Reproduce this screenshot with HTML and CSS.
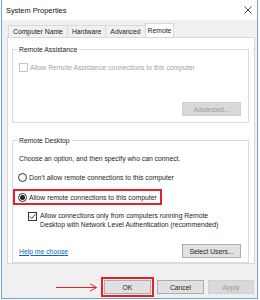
FILE: index.html
```html
<!DOCTYPE html>
<html lang="en">
<head>
    <meta charset="UTF-8">
    <title>System Properties</title>
    <link rel="stylesheet" href="styles.css">
</head>
<body>
    <div class="window">
        <div class="titlebar">
            <span class="title">System Properties</span>
            <svg class="close" width="8" height="8" viewBox="0 0 8 8">
                <path d="M0.5 0.5 L7.5 7.5 M7.5 0.5 L0.5 7.5" stroke="#333" stroke-width="0.9" fill="none"/>
            </svg>
        </div>

        <div class="client">
            <div class="tabs">
                <div class="tab">Computer Name</div>
                <div class="tab">Hardware</div>
                <div class="tab">Advanced</div>
                <div class="tab active">Remote</div>
            </div>

            <div class="panel">
                <fieldset class="group group-assist">
                    <legend>Remote Assistance</legend>
                    <div class="option disabled">
                        <span class="box"></span>
                        <span>Allow Remote Assistance connections to this computer</span>
                    </div>
                    <div class="btn-row">
                        <button class="btn wide" disabled>Advanced...</button>
                    </div>
                </fieldset>

                <fieldset class="group group-desktop">
                    <legend>Remote Desktop</legend>
                    <p class="hint">Choose an option, and then specify who can connect.</p>
                    <div class="option radio-one">
                        <span class="radio"></span>
                        <span>Don’t allow remote connections to this computer</span>
                    </div>
                    <!-- red marker around the chosen option -->
                    <div class="marker">
                        <div class="option">
                            <span class="radio checked"></span>
                            <span>Allow remote connections to this computer</span>
                        </div>
                    </div>
                    <div class="option nla">
                        <span class="box checked">
                            <svg width="7" height="7" viewBox="0 0 7 7">
                                <path d="M0.8 3.6 L2.7 5.5 L6.3 1.2" stroke="#222" stroke-width="0.9" fill="none"/>
                            </svg>
                        </span>
                        <span>Allow connections only from computers running Remote<br>Desktop with Network Level Authentication (recommended)</span>
                    </div>
                    <div class="foot-row">
                        <a href="#" class="link">Help me choose</a>
                        <button class="btn wide">Select Users...</button>
                    </div>
                </fieldset>
            </div>

            <div class="actions">
                <svg class="arrow" width="42" height="9" viewBox="0 0 42 9">
                    <path d="M0 4.5 H40.5 M34 0.8 L40.5 4.5 L34 8.2" stroke="#e8202a" stroke-width="1" fill="none"/>
                </svg>
                <div class="ok-marker">
                    <button class="btn">OK</button>
                </div>
                <button class="btn">Cancel</button>
                <button class="btn apply" disabled>Apply</button>
            </div>
        </div>
    </div>
</body>
</html>
```

FILE: styles.css
```css
* {
    margin: 0;
    padding: 0;
    box-sizing: border-box;
}

body {
    width: 260px;
    height: 300px;
    overflow: hidden;
    background: #fff;
    font-family: "Liberation Sans", Arial, sans-serif;
    font-size: 6.8px;
    line-height: 9px;
    color: #1e1e1e;
}

.window {
    margin-left: 1px;
    width: 257px;
    height: 299px;
    border: 1px solid #6aa6dd;
    border-top: none;
    display: flex;
    flex-direction: column;
}

.titlebar {
    height: 20px;
    background: #fff;
    display: flex;
    align-items: center;
    justify-content: space-between;
    padding: 0 5px 0 4px;
    font-size: 7.4px;
    color: #111;
}

.client {
    flex: 1;
    background: #f0f0f0;
    padding: 3px 2px 0 5px;
    display: flex;
    flex-direction: column;
}

/* tab strip */
.tabs {
    height: 14px;
    display: flex;
    align-items: flex-end;
    padding-left: 1px;
}

.tab {
    height: 12px;
    padding: 1px 4px 0;
    border: 1px solid #d9d9d9;
    border-bottom: none;
    background: #f0f0f0;
    margin-left: -1px;
    white-space: nowrap;
    color: #222;
}

.tab:first-child {
    margin-left: 0;
}

.tab.active {
    height: 14px;
    padding: 2px 2px 0;
    background: #fff;
}

.panel {
    height: 227px;
    background: #fff;
    border: 1px solid #d9d9d9;
    padding: 7px 5px 0 4px;
}

.group {
    border: 1px solid #dcdcdc;
    padding: 0 6px 6px;
}

.group legend {
    margin-left: -2px;
    padding: 0 2px;
    line-height: 9px;
}

.group-desktop {
    margin-top: 13px;
    padding-bottom: 4px;
}

.option {
    display: flex;
    align-items: flex-start;
    gap: 2px;
    white-space: nowrap;
}

.group-assist .option {
    margin-top: 9px;
}

.option.disabled {
    color: #a3a3a3;
}

.box {
    width: 9px;
    height: 9px;
    flex-shrink: 0;
    border: 1px solid #333;
    background: #fff;
    display: flex;
    align-items: center;
    justify-content: center;
}

.disabled .box {
    border-color: #c4c4c4;
}

.radio {
    width: 9px;
    height: 9px;
    flex-shrink: 0;
    border: 1px solid #333;
    border-radius: 50%;
    background: #fff;
    margin-left: -1px;
    display: flex;
    align-items: center;
    justify-content: center;
}

.radio.checked::after {
    content: "";
    width: 5px;
    height: 5px;
    border-radius: 50%;
    background: #222;
}

.hint {
    margin-top: 9px;
}

.radio-one {
    margin-top: 10px;
}

.marker {
    display: inline-block;
    margin-top: 7px;
    margin-left: -6px;
    border: 2px solid #e8202a;
    padding: 2px 3px 1px 4px;
}

.nla {
    margin-top: 6px;
    margin-left: 9px;
    gap: 3px;
}

.nla .box {
    margin-top: 1px;
}

.btn-row {
    display: flex;
    justify-content: flex-end;
    margin-top: 30px;
    padding-right: 1px;
}

.foot-row {
    display: flex;
    align-items: center;
    justify-content: space-between;
    margin-top: 15px;
    padding-right: 1px;
}

.link {
    color: #0a64c8;
    text-decoration: underline;
}

.btn {
    width: 47px;
    height: 14px;
    border: 1px solid #adadad;
    background: #e1e1e1;
    font-family: inherit;
    font-size: 6.8px;
    color: #1e1e1e;
}

.btn.wide {
    width: 59px;
}

.btn:disabled {
    background: #d9d9d9;
    border-color: #cfcfcf;
    color: #9c9c9c;
}

.actions {
    margin-top: 13px;
    display: flex;
    align-items: center;
    justify-content: flex-end;
    padding-right: 1px;
}

.arrow {
    margin-right: 3px;
}

.ok-marker {
    border: 2px solid #e8202a;
    padding: 1px;
    display: flex;
    margin-right: 3px;
}

.btn.apply {
    width: 46px;
    margin-left: 4px;
}
```
